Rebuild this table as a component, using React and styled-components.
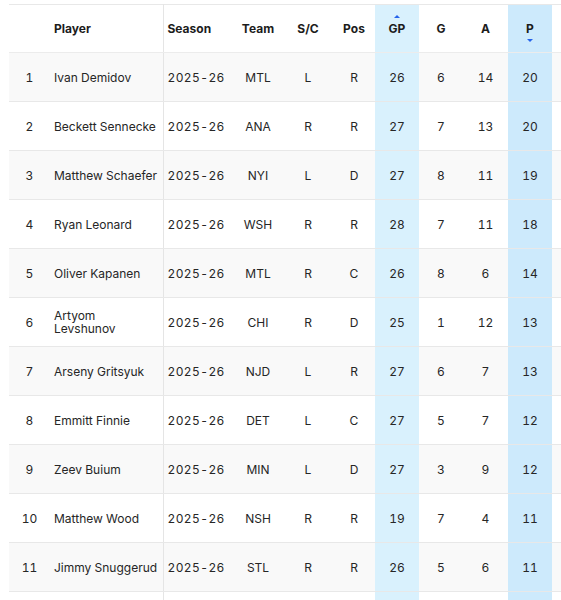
import React from "react";
import styled, {createGlobalStyle} from "styled-components";

const GlobalStyle = createGlobalStyle`
  html, body {
    margin: 0;
    padding: 0;
    background: #ffffff;
    overflow: hidden;
  }
  body {
    font-family: Inter, "Noto Sans", sans-serif;
    color: #222222;
  }
`;

const players = [
    [1, "Ivan Demidov", "MTL", "L", "R", 26, 6, 14, 20],
    [2, "Beckett Sennecke", "ANA", "R", "R", 27, 7, 13, 20],
    [3, "Matthew Schaefer", "NYI", "L", "D", 27, 8, 11, 19],
    [4, "Ryan Leonard", "WSH", "R", "R", 28, 7, 11, 18],
    [5, "Oliver Kapanen", "MTL", "R", "C", 26, 8, 6, 14],
    [6, "Artyom Levshunov", "CHI", "R", "D", 25, 1, 12, 13],
    [7, "Arseny Gritsyuk", "NJD", "L", "R", 27, 6, 7, 13],
    [8, "Emmitt Finnie", "DET", "L", "C", 27, 5, 7, 12],
    [9, "Zeev Buium", "MIN", "L", "D", 27, 3, 9, 12],
    [10, "Matthew Wood", "NSH", "R", "R", 19, 7, 4, 11],
    [11, "Jimmy Snuggerud", "STL", "R", "R", 26, 5, 6, 11],
];

const highlight = {
    gp: "#d9f1fd",
    p: "#cdeafc",
};

const Page = styled.div`
  padding: 4px 0 0 9px;
  width: 552px;
  height: 596px;
  overflow: hidden;
`;

const Table = styled.table`
  border-collapse: collapse;
  table-layout: fixed;
  width: 552px;
  font-size: 12px;
  font-variant-numeric: tabular-nums;
  border-top: 1px solid #e8e8e8;
`;

const HeadCell = styled.th`
  position: relative;
  height: 47px;
  padding: 0 4px;
  font-weight: 700;
  color: #1c1c1c;
  text-align: ${p => p.$align || "center"};
  background: ${p => (p.$hl ? highlight[p.$hl] : "#ffffff")};
  border-right: ${p => (p.$divider ? "1px solid #e5e5e5" : "none")};
  border-bottom: 1px solid #ececec;
  white-space: nowrap;
`;

const Row = styled.tr`
  background: ${p => (p.$odd ? "#f9f9f9" : "#ffffff")};
`;

const Cell = styled.td`
  height: 48px;
  padding: 0 4px;
  text-align: ${p => p.$align || "center"};
  background: ${p => (p.$hl ? highlight[p.$hl] : "transparent")};
  border-right: ${p => (p.$divider ? "1px solid #e5e5e5" : "none")};
  border-bottom: 1px solid #e8e8e8;
  line-height: 13px;
  color: #262626;
`;

const Season = styled.span`
  letter-spacing: 0.4px;
`;

const SortArrow = styled.span`
  position: absolute;
  left: 50%;
  ${p => (p.$dir === "up" ? "top: 10px;" : "bottom: 10px;")}
  transform: translateX(-50%);
  width: 0;
  height: 0;
  border-left: 3px solid transparent;
  border-right: 3px solid transparent;
  ${p => (p.$dir === "up"
        ? "border-bottom: 3px solid #2563eb;"
        : "border-top: 3px solid #2563eb;")}
`;

const columns = [
    {w: 41},
    {w: 113, title: "Player", align: "left", divider: true},
    {w: 70, title: "Season", align: "left"},
    {w: 50, title: "Team"},
    {w: 50, title: "S/C"},
    {w: 42, title: "Pos"},
    {w: 44, title: "GP", hl: "gp", arrow: "up"},
    {w: 44, title: "G"},
    {w: 45, title: "A"},
    {w: 44, title: "P", hl: "p", arrow: "down"},
    {w: 9, title: ""},
];

export default function App() {
    return (
        <>
            <GlobalStyle/>
            <Page>
                <Table>
                    <colgroup>
                        {columns.map((c, i) => <col key={i} style={{width: c.w}}/>)}
                    </colgroup>
                    <thead>
                    <tr>
                        {columns.map((c, i) => (
                            <HeadCell key={i} $align={c.align} $hl={c.hl} $divider={c.divider}>
                                {c.arrow === "up" && <SortArrow $dir="up"/>}
                                {c.title}
                                {c.arrow === "down" && <SortArrow $dir="down"/>}
                            </HeadCell>
                        ))}
                    </tr>
                    </thead>
                    <tbody>
                    {players.map(([rank, name, team, sc, pos, gp, g, a, pts], i) => (
                        <Row key={rank} $odd={i % 2 === 0}>
                            <Cell>{rank}</Cell>
                            <Cell $align="left" $divider>{name}</Cell>
                            <Cell $align="left"><Season>2025-26</Season></Cell>
                            <Cell>{team}</Cell>
                            <Cell>{sc}</Cell>
                            <Cell>{pos}</Cell>
                            <Cell $hl="gp">{gp}</Cell>
                            <Cell>{g}</Cell>
                            <Cell>{a}</Cell>
                            <Cell $hl="p">{pts}</Cell>
                            <Cell/>
                        </Row>
                    ))}
                    <Row $odd={false}>
                        {columns.map((c, i) => (
                            <Cell key={i} $hl={c.hl} $divider={c.divider}/>
                        ))}
                    </Row>
                    </tbody>
                </Table>
            </Page>
        </>
    );
}
